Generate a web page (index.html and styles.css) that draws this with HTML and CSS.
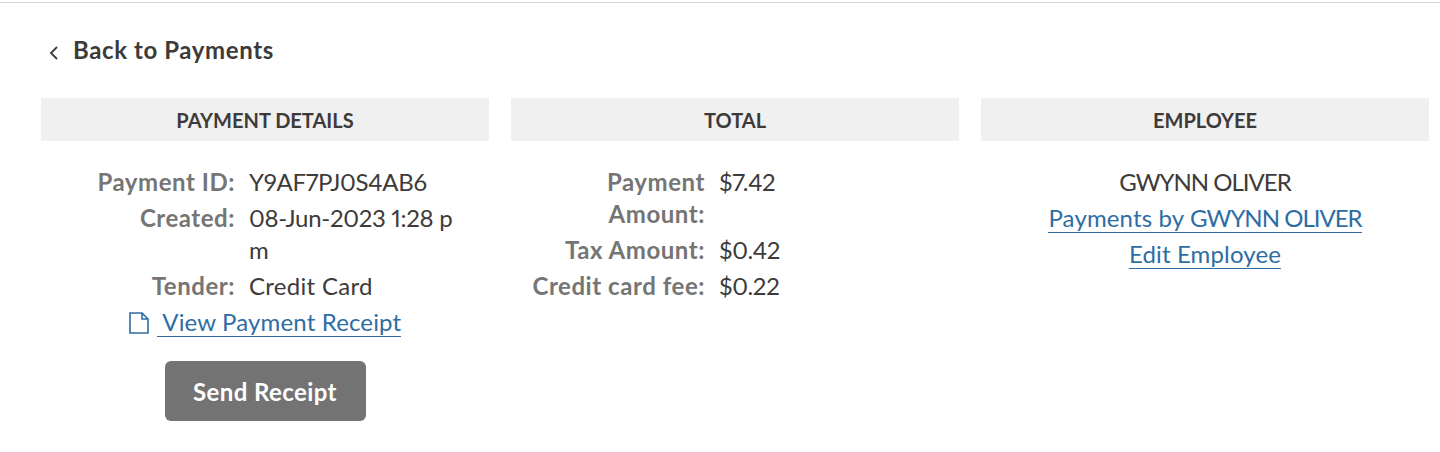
FILE: index.html
```html
<!DOCTYPE html>
<html>
<head>
    <title>Payment</title>
    <meta charset="utf-8">
    <link rel="stylesheet" href="styles.css">
</head>
<body>
    <div class="top-line"></div>
    <a class="back" href="#">
        <svg class="back-icon" width="10" height="16" viewBox="0 0 10 16"><path d="M8 2 2 8l6 6" fill="none" stroke="#3d3a3a" stroke-width="1.800"/></svg>
        <span>Back to Payments</span>
    </a>
    <div class="columns">
        <section class="col">
            <h2 class="col-title">PAYMENT DETAILS</h2>
            <div class="rows">
                <div class="label">Payment ID:</div><div class="value num">Y9AF7PJ0S4AB6</div>
                <div class="label">Created:</div><div class="value num">08-Jun-2023 1:28 pm</div>
                <div class="label">Tender:</div><div class="value">Credit Card</div>
            </div>
            <div class="center">
                <svg class="doc-icon" width="20" height="22" viewBox="0 0 20 22"><path d="M1 1h12l6 6v14H1zM13 1v6h6" fill="none" stroke="#2e6da4" stroke-width="1.600"/></svg>
                <a class="link" href="#">&nbsp;View Payment Receipt</a>
            </div>
            <div class="actions"><button class="send">Send Receipt</button></div>
        </section>
        <section class="col">
            <h2 class="col-title">TOTAL</h2>
            <div class="rows">
                <div class="label">Payment Amount:</div><div class="value num">$7.42</div>
                <div class="label">Tax Amount:</div><div class="value num">$0.42</div>
                <div class="label">Credit card fee:</div><div class="value num">$0.22</div>
            </div>
        </section>
        <section class="col">
            <h2 class="col-title">EMPLOYEE</h2>
            <div class="stack">
                <div class="center caps">GWYNN OLIVER</div>
                <div class="center"><a class="link" href="#">Payments by <span class="caps">GWYNN OLIVER</span></a></div>
                <div class="center"><a class="link" href="#">Edit Employee</a></div>
            </div>
        </section>
    </div>
</body>
</html>
```
FILE: styles.css
```css
html, body {
    margin: 0;
    height: 452px;
    overflow: hidden;
    background: #fff;
}
body {
    font-family: "Lato", "Liberation Sans", sans-serif;
    font-size: 24px;
    line-height: 32px;
    color: #3d3a3a;
    font-variant-numeric: proportional-nums;
}
.top-line {
    height: 1px;
    margin-top: 2px;
    background: #d8d8d8;
}
.back {
    display: flex;
    align-items: center;
    height: 32px;
    margin: 31px 0 0 49px;
    font-weight: 700;
    letter-spacing: 0.6px;
    color: #3d3a3a;
    text-decoration: none;
}
.back-icon {
    margin: 5px 14px 0 0;
}
.columns {
    display: grid;
    grid-template-columns: 448px 448px 448px;
    gap: 22px;
    margin: 32px 0 0 41px;
}
.col-title {
    margin: 0;
    height: 43px;
    line-height: 44px;
    font-size: 20px;
    font-weight: 700;
    text-align: center;
    background: #f0f0f0;
}
.rows {
    display: grid;
    grid-template-columns: 176px 1fr;
    column-gap: 14px;
    row-gap: 4px;
    padding: 25px 20px 0 18px;
}
.label {
    text-align: right;
    font-weight: 700;
    letter-spacing: 0.55px;
    color: #757575;
}
.value {
    word-break: break-all;
    letter-spacing: 0.3px;
}
.value.num {
    letter-spacing: -0.3px;
}
.center {
    text-align: center;
    margin-top: 4px;
}
.link {
    color: #2e6da4;
    text-decoration: none;
    border-bottom: 1px solid #2e6da4;
    letter-spacing: 0.15px;
}
.caps {
    letter-spacing: -1px;
}
.doc-icon {
    vertical-align: -3px;
    margin-right: 2px;
}
.actions {
    margin-top: 23px;
    text-align: center;
}
.send {
    width: 201px;
    height: 60px;
    border: 0;
    border-radius: 6px;
    background: #737373;
    color: #fff;
    font: 700 24px "Lato", "Liberation Sans", sans-serif;
    letter-spacing: 0.4px;
}
.stack {
    padding-top: 21px;
}
```
